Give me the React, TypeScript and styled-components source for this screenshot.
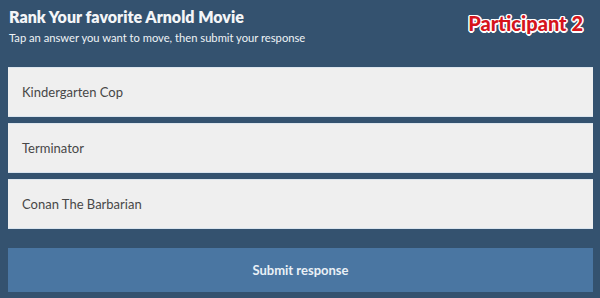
import styled, { createGlobalStyle } from "styled-components";

const GlobalStyle = createGlobalStyle`
  html, body {
    margin: 0;
    padding: 0;
    background-color: #34526f;
  }
  body {
    font-family: Lato, "Open Sans", sans-serif;
  }
`;

const movies = ["Kindergarten Cop", "Terminator", "Conan The Barbarian"];

const App = () => {
  return (
    <Pagina>
      <GlobalStyle />
      <Encabezado>
        <Titulos>
          <Titulo>Rank Your favorite Arnold Movie</Titulo>
          <Subtitulo>Tap an answer you want to move, then submit your response</Subtitulo>
        </Titulos>
        <Participante>Participant 2</Participante>
      </Encabezado>
      <Lista>
        {movies.map((m) => (
          <Opcion key={m}>{m}</Opcion>
        ))}
      </Lista>
      <Boton>Submit response</Boton>
    </Pagina>
  );
};
export default App;

const Pagina = styled.div`
  width: 600px;
  height: 298px;
  box-sizing: border-box;
  padding: 7px 7px 0 8px;
  background-color: #34526f;
  display: flex;
  flex-direction: column;
`;

const Encabezado = styled.div`
  display: flex;
  justify-content: space-between;
  align-items: flex-start;
  height: 60px;
`;

const Titulos = styled.div`
  display: flex;
  flex-direction: column;
  padding-left: 1px;
`;

const Titulo = styled.h1`
  margin: 0;
  font-size: 16px;
  font-weight: 800;
  color: #f4f6f8;
  line-height: 20px;
`;

const Subtitulo = styled.p`
  margin: 4px 0 0;
  font-size: 11.2px;
  color: #eef2f6;
  line-height: 14px;
`;

const Participante = styled.div`
  margin-top: 5px;
  margin-right: 10px;
  font-size: 20px;
  font-weight: 900;
  color: #d5141c;
  line-height: 22px;
  text-shadow:
    -1px -1px 0 #fff, 1px -1px 0 #fff, -1px 1px 0 #fff, 1px 1px 0 #fff,
    0 -1.5px 0 #fff, 0 1.5px 0 #fff, -1.5px 0 0 #fff, 1.5px 0 0 #fff;
`;

const Lista = styled.div`
  display: flex;
  flex-direction: column;
  gap: 6px;
`;

const Opcion = styled.div`
  height: 50px;
  box-sizing: border-box;
  background-color: #efefef;
  border-top: 1px solid #dde6ee;
  border-bottom: 1px solid #d9e4ee;
  padding-left: 14px;
  display: flex;
  align-items: center;
  font-size: 13px;
  color: #474747;
`;

const Boton = styled.button`
  margin-top: 19px;
  height: 44px;
  border: none;
  background-color: #4a76a2;
  color: #e9f0f6;
  font-family: Lato, "Open Sans", sans-serif;
  font-size: 13px;
  font-weight: 700;
  cursor: pointer;
`;
